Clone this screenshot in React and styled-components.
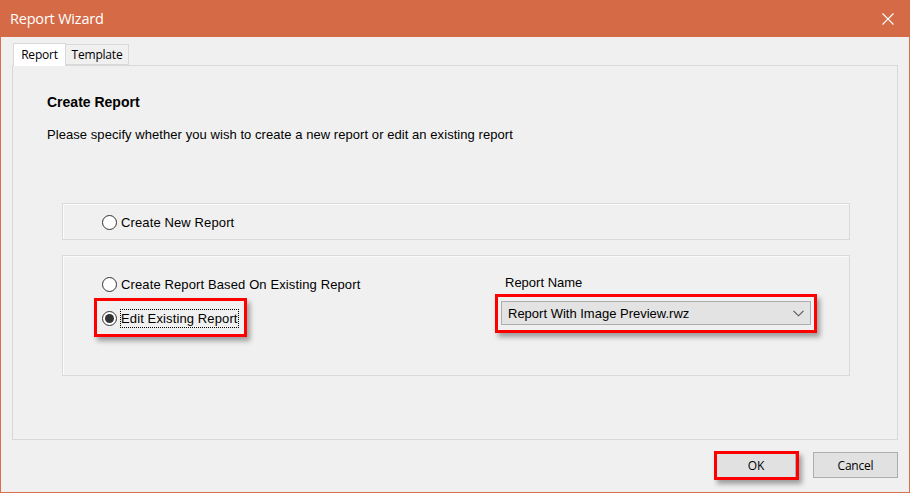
import React from "react";
import styled, { createGlobalStyle } from "styled-components";

const Global = createGlobalStyle`
  html, body { margin: 0; padding: 0; background: #f0f0f0; }
  * { box-sizing: border-box; }
`;

const Window = styled.div`
  width: 910px;
  height: 493px;
  display: flex;
  flex-direction: column;
  background: #f0f0f0;
  border: 1px solid #d8704d;
  border-top: none;
  font-family: "Liberation Sans", Arial, sans-serif;
  color: #000;
`;

const TitleBar = styled.div`
  height: 37px;
  flex: none;
  background: #d46a46;
  margin: 0 -1px;
  display: flex;
  align-items: center;
  justify-content: space-between;
  padding: 0 16px 0 10px;
  color: #fff;
  font-family: "Open Sans", "Noto Sans", sans-serif;
  font-size: 14.5px;
  letter-spacing: -0.2px;
`;

const CloseBtn = styled.div`
  width: 12px;
  height: 12px;
  display: flex;
`;

const Body = styled.div`
  flex: 1;
  display: flex;
  flex-direction: column;
  padding: 6px 11px 0 11px;
`;

const TabRow = styled.div`
  display: flex;
  align-items: flex-end;
  height: 22px;
  padding-left: 1px;
  position: relative;
  z-index: 1;
`;

const Tab = styled.div`
  height: ${(p) => (p.$active ? 23 : 21)}px;
  margin-bottom: ${(p) => (p.$active ? -1 : 0)}px;
  width: ${(p) => p.$w}px;
  background: ${(p) => (p.$active ? "#ffffff" : "#f0f0f0")};
  border: 1px solid #d9d9d9;
  border-bottom: ${(p) => (p.$active ? "none" : "1px solid #d9d9d9")};
  ${(p) => (p.$active ? "" : "border-left: none;")}
  display: flex;
  align-items: center;
  justify-content: center;
  font-family: "Open Sans", "Noto Sans", sans-serif;
  font-size: 12px;
  letter-spacing: -0.2px;
  padding-bottom: ${(p) => (p.$active ? 2 : 0)}px;
`;

const Panel = styled.div`
  width: 886px;
  height: 375px;
  border: 1px solid #d9d9d9;
  background: #f0f0f0;
  padding: 28px 0 0 34px;
  display: flex;
  flex-direction: column;
`;

const Heading = styled.div`
  font-weight: bold;
  font-size: 14px;
  line-height: 16px;
`;

const Description = styled.div`
  font-size: 13px;
  line-height: 16px;
  margin-top: 17px;
  letter-spacing: 0.06px;
`;

const Group = styled.div`
  width: 788px;
  margin-left: 15px;
  margin-top: ${(p) => p.$mt}px;
  height: ${(p) => p.$h}px;
  border: 1px solid #dadada;
  box-shadow: inset 1px 1px 0 #fbfbfb;
  padding-left: 39px;
  padding-top: ${(p) => p.$pt}px;
`;

const GroupGrid = styled.div`
  display: grid;
  grid-template-columns: 399px 315px;
`;

const Col = styled.div`
  display: flex;
  flex-direction: column;
`;

const RadioRow = styled.label`
  display: flex;
  align-items: center;
  height: ${(p) => p.$h || 18}px;
  font-size: 13px;
  gap: 3px;
  width: max-content;
`;

const RadioCircle = styled.span`
  width: 15px;
  height: 15px;
  border-radius: 50%;
  border: 1px solid #333;
  background: #fff;
  display: flex;
  align-items: center;
  justify-content: center;
  &::after {
    content: "";
    width: 9px;
    height: 9px;
    border-radius: 50%;
    background: #333;
    display: ${(p) => (p.$checked ? "block" : "none")};
  }
`;

const RadioText = styled.span`
  padding: 1px 0;
  border: 1px dotted ${(p) => (p.$focus ? "#000" : "transparent")};
  line-height: 15px;
  letter-spacing: 0.12px;
`;

const Highlight = styled.div`
  position: relative;
  width: max-content;
  margin-top: ${(p) => p.$mt || 0}px;
  &::after {
    content: "";
    position: absolute;
    left: ${(p) => p.$l}px;
    top: ${(p) => p.$t}px;
    right: ${(p) => p.$r}px;
    bottom: ${(p) => p.$b}px;
    border: 3px solid #ff0000;
    box-shadow: 3px 4px 5px rgba(0, 0, 0, 0.35);
    pointer-events: none;
  }
`;

const FieldLabel = styled.div`
  font-size: 13px;
  line-height: 16px;
  margin-top: 1px;
  padding-left: 4px;
`;

const Select = styled.div`
  width: 310px;
  height: 24px;
  border: 1px solid #adadad;
  background: #e3e3e3;
  display: flex;
  align-items: center;
  justify-content: space-between;
  padding: 0 6px 0 6px;
  font-size: 13px;
`;

const Footer = styled.div`
  display: flex;
  justify-content: flex-end;
  align-items: center;
  gap: 17px;
  padding: 12px 0 0 0;
`;

const Button = styled.div`
  width: ${(p) => p.$w}px;
  height: 26px;
  border: 1px solid #adadad;
  background: #e1e1e1;
  display: flex;
  align-items: center;
  justify-content: center;
  font-family: "Open Sans", "Noto Sans", sans-serif;
  font-size: 12px;
  letter-spacing: -0.2px;
`;

export default function App() {
  return (
    <>
      <Global />
      <Window>
        <TitleBar>
          <span>Report Wizard</span>
          <CloseBtn>
            <svg width="12" height="12" viewBox="0 0 12 12">
              <path d="M0.5 0.5 L11.5 11.5 M11.5 0.5 L0.5 11.5" stroke="#fff" strokeWidth="1.1" />
            </svg>
          </CloseBtn>
        </TitleBar>
        <Body>
          <TabRow>
            <Tab $active $w={53}>Report</Tab>
            <Tab $w={63}>Template</Tab>
          </TabRow>
          <Panel>
            <Heading>Create Report</Heading>
            <Description>
              Please specify whether you wish to create a new report or edit an existing report
            </Description>
            <Group $mt={60} $h={37} $pt={9}>
              <RadioRow>
                <RadioCircle />
                <RadioText>Create New Report</RadioText>
              </RadioRow>
            </Group>
            <Group $mt={15} $h={121} $pt={18}>
              <GroupGrid>
                <Col>
                  <RadioRow $h={20}>
                    <RadioCircle />
                    <RadioText>Create Report Based On Existing Report</RadioText>
                  </RadioRow>
                  <Highlight $mt={14} $l={-8} $t={-10} $r={-8} $b={-9}>
                    <RadioRow $h={20}>
                      <RadioCircle $checked />
                      <RadioText $focus>Edit Existing Report</RadioText>
                    </RadioRow>
                  </Highlight>
                </Col>
                <Col>
                  <FieldLabel>Report Name</FieldLabel>
                  <Highlight $mt={10} $l={-6} $t={-7} $r={-6} $b={-8}>
                    <Select>
                      <span>Report With Image Preview.rwz</span>
                      <svg width="11" height="7" viewBox="0 0 11 7">
                        <path d="M0.5 0.8 L5.5 5.8 L10.5 0.8" fill="none" stroke="#555" strokeWidth="1.1" />
                      </svg>
                    </Select>
                  </Highlight>
                </Col>
              </GroupGrid>
            </Group>
          </Panel>
          <Footer>
            <Highlight $l={-2} $t={-1} $r={-3} $b={-2}>
              <Button $w={80}>OK</Button>
            </Highlight>
            <Button $w={85}>Cancel</Button>
          </Footer>
        </Body>
      </Window>
    </>
  );
}
